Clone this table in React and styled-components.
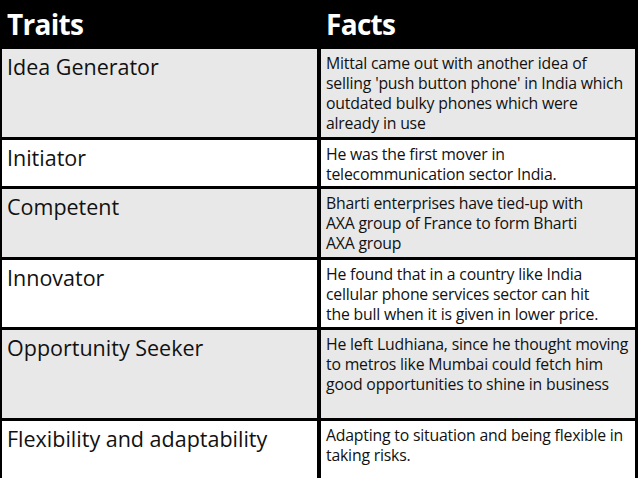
import React from "react";
import styled, { createGlobalStyle } from "styled-components";

const Global = createGlobalStyle`
  html, body { margin: 0; padding: 0; background: #000; }
  body { width: 638px; height: 478px; overflow: hidden; font-family: "Open Sans", Lato, sans-serif; }
`;

const Table = styled.div`
  display: grid;
  grid-template-columns: 315px 314px;
  grid-template-rows: 46px 88px 46px 68px 67px 88px 60px;
  column-gap: 4px;
  row-gap: 3px;
  padding: 0 3px 0 2px;
  background: #000;
  width: 638px;
  box-sizing: border-box;
`;

const HeadCell = styled.div`
  color: #fff;
  font-weight: 700;
  font-size: 28px;
  line-height: 46px;
  padding: 1px 0 0 5px;
  letter-spacing: -0.7px;
  box-sizing: border-box;
`;

const Cell = styled.div`
  background: ${(p) => (p.$shade ? "#e8e8e8" : "#ffffff")};
  color: #111;
  overflow: hidden;
  box-sizing: border-box;
`;

const Trait = styled(Cell)`
  font-size: 21.5px;
  line-height: 26px;
  padding: 5px 4px 0 5px;
`;

const Fact = styled(Cell)`
  font-size: 15.8px;
  line-height: 20px;
  padding: 4px 3px 0 5px;
  letter-spacing: -0.2px;
`;

const Line = styled.span`
  display: block;
  white-space: nowrap;
`;

const rows = [
  {
    trait: "Idea Generator",
    fact: [
      "Mittal came out with another idea of",
      "selling 'push button phone' in India which",
      "outdated bulky phones which were",
      "already in use",
    ],
  },
  {
    trait: "Initiator",
    fact: ["He was the first mover in", "telecommunication sector India."],
  },
  {
    trait: "Competent",
    fact: [
      "Bharti enterprises have tied-up with",
      "AXA group of France to form Bharti",
      "AXA group",
    ],
  },
  {
    trait: "Innovator",
    fact: [
      "He found that in a country like India",
      "cellular phone services sector can hit",
      "the bull when it is given in lower price.",
    ],
  },
  {
    trait: "Opportunity Seeker",
    fact: [
      "He left Ludhiana, since he thought moving",
      "to metros like Mumbai could fetch him",
      "good opportunities to shine in business",
    ],
  },
  {
    trait: "Flexibility and adaptability",
    fact: ["Adapting to situation and being flexible in", "taking risks."],
  },
];

export default function App() {
  return (
    <>
      <Global />
      <Table>
        <HeadCell>Traits</HeadCell>
        <HeadCell>Facts</HeadCell>
        {rows.map((r, i) => (
          <React.Fragment key={r.trait}>
            <Trait $shade={i % 2 === 0}>{r.trait}</Trait>
            <Fact $shade={i % 2 === 0}>
              {r.fact.map((l) => (
                <Line key={l}>{l}</Line>
              ))}
            </Fact>
          </React.Fragment>
        ))}
      </Table>
    </>
  );
}
